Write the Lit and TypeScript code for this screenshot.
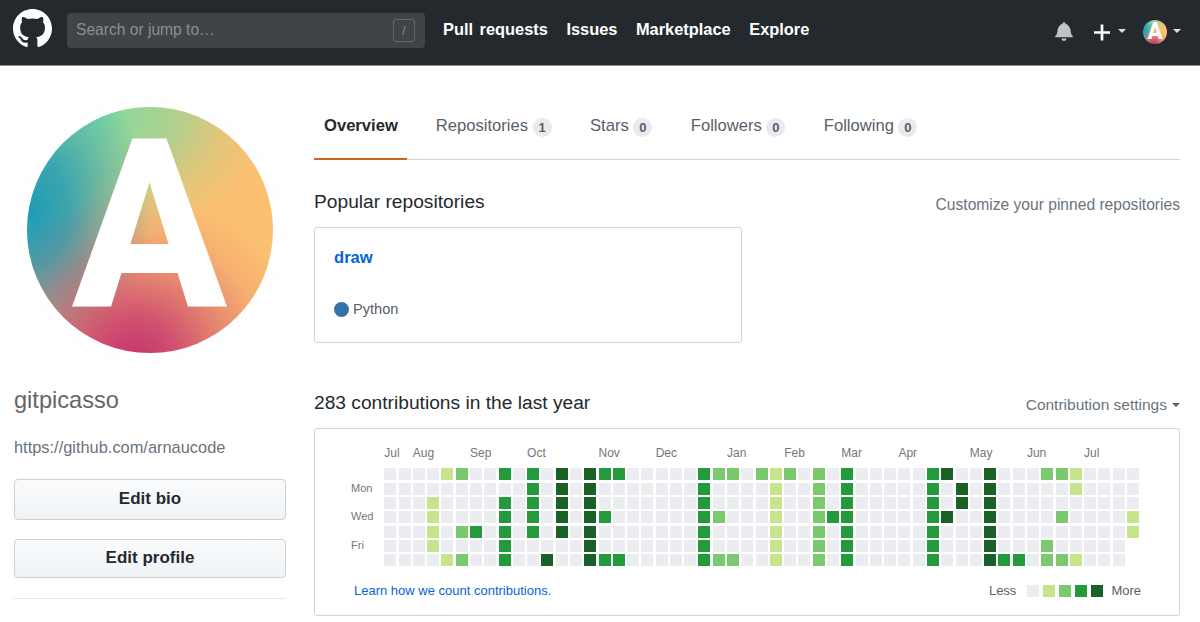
import { LitElement, html, css, svg } from 'lit';
import { customElement } from 'lit/decorators.js';

const WEEKS = 53;

// level per weekday for the columns that have contributions, the rest are 0
const ACTIVE: Record<number, number[]> = {
  3: [0, 0, 1, 1, 1, 1, 0],
  4: [1, 0, 0, 0, 0, 0, 1],
  5: [2, 0, 0, 0, 2, 0, 2],
  6: [0, 0, 0, 0, 3, 0, 0],
  8: [3, 0, 3, 3, 3, 3, 3],
  10: [3, 3, 3, 3, 3, 0, 0],
  11: [0, 0, 0, 0, 0, 0, 4],
  12: [4, 4, 4, 4, 4, 0, 0],
  14: [4, 4, 4, 4, 4, 4, 4],
  15: [3, 0, 0, 3, 0, 0, 3],
  16: [3, 0, 0, 0, 0, 0, 3],
  22: [3, 3, 3, 3, 3, 3, 3],
  23: [2, 0, 0, 2, 0, 0, 2],
  24: [2, 0, 0, 0, 0, 0, 2],
  26: [2, 0, 0, 0, 0, 0, 0],
  27: [1, 1, 1, 1, 1, 1, 1],
  28: [2, 0, 0, 0, 0, 0, 0],
  30: [2, 2, 2, 2, 2, 2, 2],
  31: [0, 0, 0, 3, 0, 0, 0],
  32: [3, 3, 3, 3, 3, 3, 3],
  38: [3, 3, 3, 3, 3, 3, 3],
  39: [4, 0, 0, 4, 0, 0, 0],
  40: [0, 4, 4, 0, 0, 0, 0],
  42: [4, 4, 4, 4, 4, 4, 4],
  43: [0, 0, 0, 0, 0, 0, 3],
  44: [0, 0, 0, 0, 0, 0, 3],
  46: [2, 0, 0, 0, 0, 2, 2],
  47: [2, 0, 0, 2, 0, 0, 2],
  48: [1, 1, 0, 0, 0, 0, 1],
  52: [0, 0, 0, 1, 1],
};

const MONTHS: [string, number][] = [
  ['Jul', 0], ['Aug', 2], ['Sep', 6], ['Oct', 10], ['Nov', 15], ['Dec', 19], ['Jan', 24],
  ['Feb', 28], ['Mar', 32], ['Apr', 36], ['May', 41], ['Jun', 45], ['Jul', 49],
];

const TABS: [string, string][] = [
  ['Repositories', '1'],
  ['Stars', '0'],
  ['Followers', '0'],
  ['Following', '0'],
];

const MARK = 'M8 0C3.58 0 0 3.58 0 8c0 3.54 2.29 6.53 5.47 7.59.4.07.55-.17.55-.38 0-.19-.01-.82-.01-1.49-2.01.37-2.53-.49-2.69-.94-.09-.23-.48-.94-.82-1.13-.28-.15-.68-.52-.01-.53.63-.01 1.08.58 1.23.82.72 1.21 1.87.87 2.33.66.07-.52.28-.87.51-1.07-1.78-.2-3.64-.89-3.64-3.95 0-.87.31-1.59.82-2.15-.08-.2-.36-1.02.08-2.12 0 0 .67-.21 2.2.82.64-.18 1.32-.27 2-.27.68 0 1.36.09 2 .27 1.53-1.04 2.2-.82 2.2-.82.44 1.1.16 1.92.08 2.12.51.56.82 1.27.82 2.15 0 3.07-1.87 3.75-3.65 3.95.29.25.54.73.54 1.48 0 1.07-.01 1.93-.01 2.2 0 .21.15.46.55.38A8.013 8.013 0 0016 8c0-4.42-3.58-8-8-8z';
const BELL = 'M14 12v1H0v-1l.73-.58c.77-.77.81-2.55 1.19-4.42C2.69 3.23 6 2 6 2c0-.55.45-1 1-1s1 .45 1 1c0 0 3.39 1.23 4.16 5 .38 1.88.42 3.66 1.19 4.42l.66.58H14zm-7 4c1.11 0 2-.89 2-2H5c0 1.11.89 2 2 2z';
const PLUS = 'M12 9H7v5H5V9H0V7h5V2h2v5h5v2z';

@customElement('user-avatar')
class UserAvatar extends LitElement {
  static styles = css`
    :host {
      display: block;
      width: 100%;
      aspect-ratio: 1;
      border-radius: 50%;
      background:
        radial-gradient(circle at 44% 103%, #c4336f 0, rgba(196, 51, 111, 0.78) 15%, rgba(196, 51, 111, 0.42) 30%, rgba(196, 51, 111, 0.12) 45%, rgba(196, 51, 111, 0) 58%),
        radial-gradient(ellipse 50% 65% at 0 42%, #1a9cb8 0, rgba(26, 156, 184, 0.8) 35%, rgba(26, 156, 184, 0.35) 70%, rgba(26, 156, 184, 0) 100%),
        radial-gradient(ellipse 70% 55% at 28% 2%, #7fdba0 0, rgba(127, 219, 160, 0.62) 45%, rgba(127, 219, 160, 0.2) 75%, rgba(127, 219, 160, 0) 100%),
        #fcc071;
    }
    svg {
      display: block;
      width: 100%;
      height: 100%;
      overflow: visible;
    }
    text {
      font-family: Roboto, 'Liberation Sans', Arial, sans-serif;
      font-weight: 800;
      fill: #fff;
    }
  `;

  render() {
    return html`<svg viewBox="0 0 246 246">
      <text x="122.5" y="199" text-anchor="middle" font-size="236" textLength="155" lengthAdjust="spacingAndGlyphs">A</text>
    </svg>`;
  }
}

@customElement('app-root')
export class AppRoot extends LitElement {
  static styles = css`
    :host {
      display: block;
      width: 1200px;
      height: 622px;
      overflow: hidden;
      background: #fff;
      font-family: 'Liberation Sans', Arial, sans-serif;
      color: #24292e;
    }
    a {
      text-decoration: none;
      color: inherit;
    }

    /* top bar */
    .nav {
      display: flex;
      align-items: center;
      height: 66px;
      box-sizing: border-box;
      padding: 0 19px 4px 13px;
      background: #24292e;
      border-bottom: 1px solid #8a8f94;
    }
    .mark {
      width: 39px;
      height: 39px;
      margin-bottom: 5px;
      fill: #fff;
      flex: none;
    }
    .search {
      display: flex;
      align-items: center;
      justify-content: space-between;
      box-sizing: border-box;
      width: 358px;
      height: 35px;
      margin-left: 15px;
      padding: 0 10px 0 9px;
      border-radius: 4px;
      background: #3f4448;
      color: #8b8f92;
      font-size: 15.6px;
    }
    .search > span:first-child {
      margin-bottom: 2px;
    }
    .slash {
      display: flex;
      align-items: center;
      justify-content: center;
      box-sizing: border-box;
      width: 22px;
      height: 23px;
      border: 1px solid #63676b;
      border-radius: 3px;
      font-size: 12px;
      color: #8b8f92;
    }
    .links {
      display: flex;
      gap: 18.5px;
      margin: 0 0 3px 18px;
      color: #fff;
      font-size: 16.4px;
      font-weight: 700;
      word-spacing: 2px;
    }
    .actions {
      display: flex;
      align-items: center;
      margin-left: auto;
    }
    .bell {
      width: 18px;
      height: 20px;
      fill: rgba(255, 255, 255, 0.72);
    }
    .plus {
      width: 12px;
      height: 17px;
      margin: 3px 0 0 23px;
      fill: #fff;
      transform: scale(1.35);
    }
    .caret {
      width: 0;
      height: 0;
      margin-left: 10px;
      border: 4px solid transparent;
      border-top-color: rgba(255, 255, 255, 0.85);
      border-bottom: 0;
    }
    .small-avatar {
      width: 24px;
      margin: 3px 0 0 17px;
    }
    .small-avatar + .caret {
      margin-left: 6px;
    }

    /* page */
    .page {
      display: flex;
      gap: 28px;
      padding: 41px 20px 0 14px;
    }
    .side {
      flex: none;
      width: 272px;
    }
    .avatar-ring {
      box-sizing: border-box;
      width: 272px;
      padding: 0 13px;
    }
    .avatar-ring user-avatar {
      outline: 1px dashed #f4f6f8;
      outline-offset: 8px;
    }
    .name {
      margin-top: 32px;
      font-size: 23.6px;
      font-weight: 400;
      line-height: 30px;
      color: #666;
    }
    .url {
      margin-top: 22px;
      font-size: 16.4px;
      line-height: 20px;
      color: #6a737d;
    }
    .btn {
      display: block;
      box-sizing: border-box;
      width: 100%;
      height: 41px;
      line-height: 37px;
      margin-top: 22px;
      border: 1px solid #ced0d3;
      border-radius: 4px;
      background: linear-gradient(#fafbfc, #eff3f6);
      text-align: center;
      font-size: 17px;
      font-weight: 700;
      color: #24292e;
    }
    .btn + .btn {
      margin-top: 19px;
      height: 39px;
      line-height: 35px;
    }
    .rule {
      margin-top: 20px;
      height: 1px;
      background: #e6e8eb;
    }
    .main {
      flex: 1;
      min-width: 0;
    }

    /* tabs */
    .tabs {
      display: flex;
      height: 52px;
      border-bottom: 1px solid #d1d5da;
    }
    .tab {
      display: flex;
      align-items: flex-start;
      gap: 4.5px;
      box-sizing: border-box;
      height: 53px;
      padding: 9px 10px 0;
      margin-right: 18.5px;
      font-size: 16.6px;
      line-height: 20px;
      color: #586069;
    }
    .tab.on {
      padding-right: 9px;
      margin-right: 19px;
      font-weight: 700;
      color: #24292e;
      border-bottom: 2px solid #d0641f;
    }
    .count {
      min-width: 19px;
      height: 19px;
      margin-top: 2px;
      border-radius: 10px;
      background: #e8eaed;
      text-align: center;
      font-size: 13px;
      font-weight: 700;
      line-height: 19px;
      color: #586069;
    }

    .section-head {
      display: flex;
      align-items: flex-start;
      justify-content: space-between;
    }
    .section-head h2 {
      margin: 0;
      font-size: 19.2px;
      font-weight: 400;
      line-height: 24px;
      color: #24292e;
    }
    .section-head a {
      padding-top: 5px;
      font-size: 15.6px;
      line-height: 20px;
      color: #6a737d;
    }
    .popular {
      margin-top: 30px;
    }
    .repo {
      box-sizing: border-box;
      width: 428px;
      height: 116px;
      margin-top: 12px;
      padding: 20px 19px 0;
      border: 1px solid #d1d5da;
      border-radius: 3px;
    }
    .repo a {
      display: block;
      font-size: 16.6px;
      font-weight: 700;
      line-height: 20px;
      color: #0366d6;
    }
    .lang {
      display: flex;
      align-items: center;
      gap: 4px;
      margin-top: 31px;
      font-size: 14.6px;
      line-height: 20px;
      color: #586069;
    }
    .dot {
      width: 15px;
      height: 15px;
      border-radius: 50%;
      background: #3572a5;
    }
    .contrib {
      margin-top: 48px;
    }
    .section-head a.settings {
      display: flex;
      align-items: center;
      gap: 5px;
      padding-top: 4px;
      font-size: 15.5px;
    }
    .settings i {
      width: 0;
      height: 0;
      border: 4px solid transparent;
      border-top-color: #586069;
      border-bottom: 0;
    }

    /* calendar */
    .calendar {
      box-sizing: border-box;
      height: 188px;
      margin-top: 13px;
      padding: 17px 38px 0 25px;
      border: 1px solid #d1d5da;
      border-radius: 3px;
    }
    .graph {
      display: grid;
      grid-template-columns: 42px repeat(53, 12px);
      grid-template-rows: 20px repeat(7, 12px);
      column-gap: 2.29px;
      row-gap: 2.33px;
      font-size: 12px;
      color: #767676;
    }
    .month {
      grid-row: 1;
      line-height: 14px;
      white-space: nowrap;
      min-width: 0;
    }
    .day {
      grid-column: 1;
      margin-top: -1px;
      padding-left: 11px;
      font-size: 11px;
      line-height: 12px;
    }
    .cell {
      background: #ebedf0;
    }
    .l1 { background: #c6e48b; }
    .l2 { background: #7bc96f; }
    .l3 { background: #239a3b; }
    .l4 { background: #196127; }
    .foot {
      display: flex;
      align-items: center;
      justify-content: space-between;
      margin-top: 17px;
      padding-left: 14px;
      font-size: 13px;
      line-height: 16px;
    }
    .foot a {
      color: #0366d6;
    }
    .legend {
      display: flex;
      align-items: center;
      gap: 4px;
      color: #586069;
    }
    .legend .cell {
      width: 12px;
      height: 12px;
    }
    .legend span:first-child {
      margin-right: 7px;
    }
    .legend span:last-child {
      margin-left: 4px;
    }
  `;

  private level(week: number, day: number) {
    const col = ACTIVE[week];
    return col ? col[day] ?? 0 : 0;
  }

  private renderGraph() {
    const cells = [];
    for (let w = 0; w < WEEKS; w++) {
      const days = w === WEEKS - 1 ? 5 : 7;
      for (let d = 0; d < days; d++) {
        const lvl = this.level(w, d);
        cells.push(html`<div
          class="cell ${lvl ? `l${lvl}` : ''}"
          style="grid-column:${w + 2};grid-row:${d + 2}"
        ></div>`);
      }
    }
    return html`<div class="graph">
      ${MONTHS.map(([m, w]) => html`<div class="month" style="grid-column:${w + 2}">${m}</div>`)}
      <div class="day" style="grid-row:3">Mon</div>
      <div class="day" style="grid-row:5">Wed</div>
      <div class="day" style="grid-row:7">Fri</div>
      ${cells}
    </div>`;
  }

  render() {
    return html`
      <header class="nav">
        <svg class="mark" viewBox="0 0 16 16">${svg`<path d=${MARK}></path>`}</svg>
        <div class="search"><span>Search or jump to…</span><span class="slash">/</span></div>
        <nav class="links">
          <a href="#">Pull requests</a>
          <a href="#">Issues</a>
          <a href="#">Marketplace</a>
          <a href="#">Explore</a>
        </nav>
        <div class="actions">
          <svg class="bell" viewBox="0 0 14 16">${svg`<path d=${BELL}></path>`}</svg>
          <svg class="plus" viewBox="0 0 12 16">${svg`<path d=${PLUS}></path>`}</svg>
          <span class="caret"></span>
          <div class="small-avatar"><user-avatar></user-avatar></div>
          <span class="caret"></span>
        </div>
      </header>
      <div class="page">
        <aside class="side">
          <div class="avatar-ring"><user-avatar></user-avatar></div>
          <div class="name">gitpicasso</div>
          <div class="url">https://github.com/arnaucode</div>
          <a class="btn" href="#">Edit bio</a>
          <a class="btn" href="#">Edit profile</a>
          <div class="rule"></div>
        </aside>
        <main class="main">
          <div class="tabs">
            <a class="tab on" href="#">Overview</a>
            ${TABS.map(([label, n]) => html`<a class="tab" href="#">${label}<span class="count">${n}</span></a>`)}
          </div>
          <div class="section-head popular">
            <h2>Popular repositories</h2>
            <a href="#">Customize your pinned repositories</a>
          </div>
          <div class="repo">
            <a href="#">draw</a>
            <div class="lang"><span class="dot"></span>Python</div>
          </div>
          <div class="section-head contrib">
            <h2>283 contributions in the last year</h2>
            <a class="settings" href="#">Contribution settings<i></i></a>
          </div>
          <div class="calendar">
            ${this.renderGraph()}
            <div class="foot">
              <a href="#">Learn how we count contributions.</a>
              <div class="legend">
                <span>Less</span>
                <div class="cell"></div>
                <div class="cell l1"></div>
                <div class="cell l2"></div>
                <div class="cell l3"></div>
                <div class="cell l4"></div>
                <span>More</span>
              </div>
            </div>
          </div>
        </main>
      </div>
    `;
  }
}
